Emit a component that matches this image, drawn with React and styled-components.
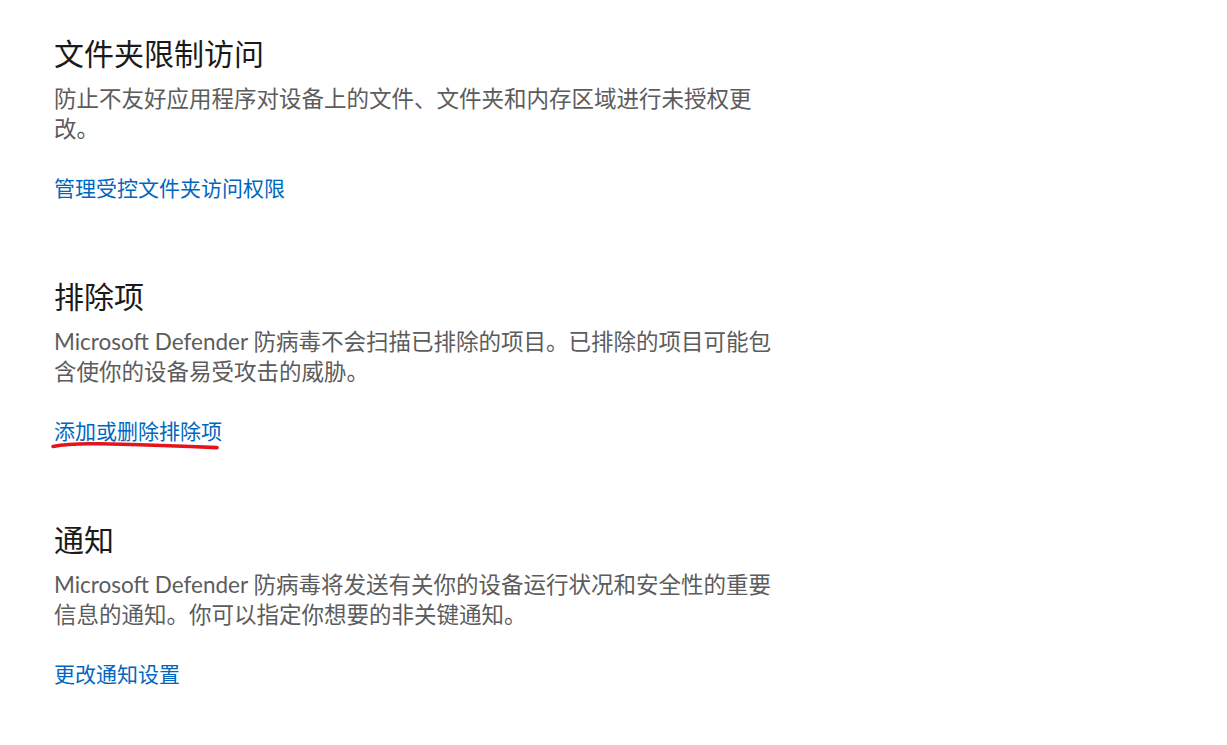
import React from 'react';
import styled, { createGlobalStyle } from 'styled-components';

const GlobalStyle = createGlobalStyle`
  html,
  body {
    background: #fff;
    margin: 0;
    padding: 0;
  }

  body {
    font-family: Lato, 'Noto Sans CJK SC', sans-serif;
  }
`;

const Page = styled.main`
  display: flex;
  flex-direction: column;
  gap: 72px;
  padding: 32px 0 0 54px;
`;

const Section = styled.section`
  display: flex;
  flex-direction: column;
  align-items: flex-start;
  width: 720px;
`;

const Title = styled.h2`
  color: #1a1a1a;
  font-family: 'Noto Sans CJK SC', sans-serif;
  font-size: 30px;
  font-weight: 400;
  line-height: 40px;
  margin: 0 0 12px;
`;

const Text = styled.p`
  color: #5c5c5c;
  font-size: 22.5px;
  line-height: 30px;
  margin: 0 0 29px;
`;

const Link = styled.a`
  color: #0067c0;
  cursor: pointer;
  display: inline-block;
  font-size: 21px;
  line-height: 30px;
  position: relative;
  text-decoration: none;
`;

const Scribble = styled.svg`
  left: -4px;
  pointer-events: none;
  position: absolute;
  top: 24px;
`;

const sections = [
  {
    title: '文件夹限制访问',
    text: '防止不友好应用程序对设备上的文件、文件夹和内存区域进行未授权更改。',
    link: '管理受控文件夹访问权限',
  },
  {
    title: '排除项',
    text: 'Microsoft Defender 防病毒不会扫描已排除的项目。已排除的项目可能包含使你的设备易受攻击的威胁。',
    link: '添加或删除排除项',
    marked: true,
  },
  {
    title: '通知',
    text: 'Microsoft Defender 防病毒将发送有关你的设备运行状况和安全性的重要信息的通知。你可以指定你想要的非关键通知。',
    link: '更改通知设置',
  },
];

export default function App() {
  return (
    <>
      <GlobalStyle />
      <Page>
        {sections.map((s) => (
          <Section key={s.title}>
            <Title>{s.title}</Title>
            <Text>{s.text}</Text>
            <Link>
              {s.link}
              {s.marked && (
                <Scribble width="172" height="12" viewBox="0 0 172 12">
                  <path
                    d="M3 6.4 C 15 4, 28 3.3, 50 3.8 S 120 5.5, 167 7.6"
                    fill="none"
                    stroke="#e3141c"
                    strokeWidth="3.6"
                    strokeLinecap="round"
                  />
                </Scribble>
              )}
            </Link>
          </Section>
        ))}
      </Page>
    </>
  );
}
